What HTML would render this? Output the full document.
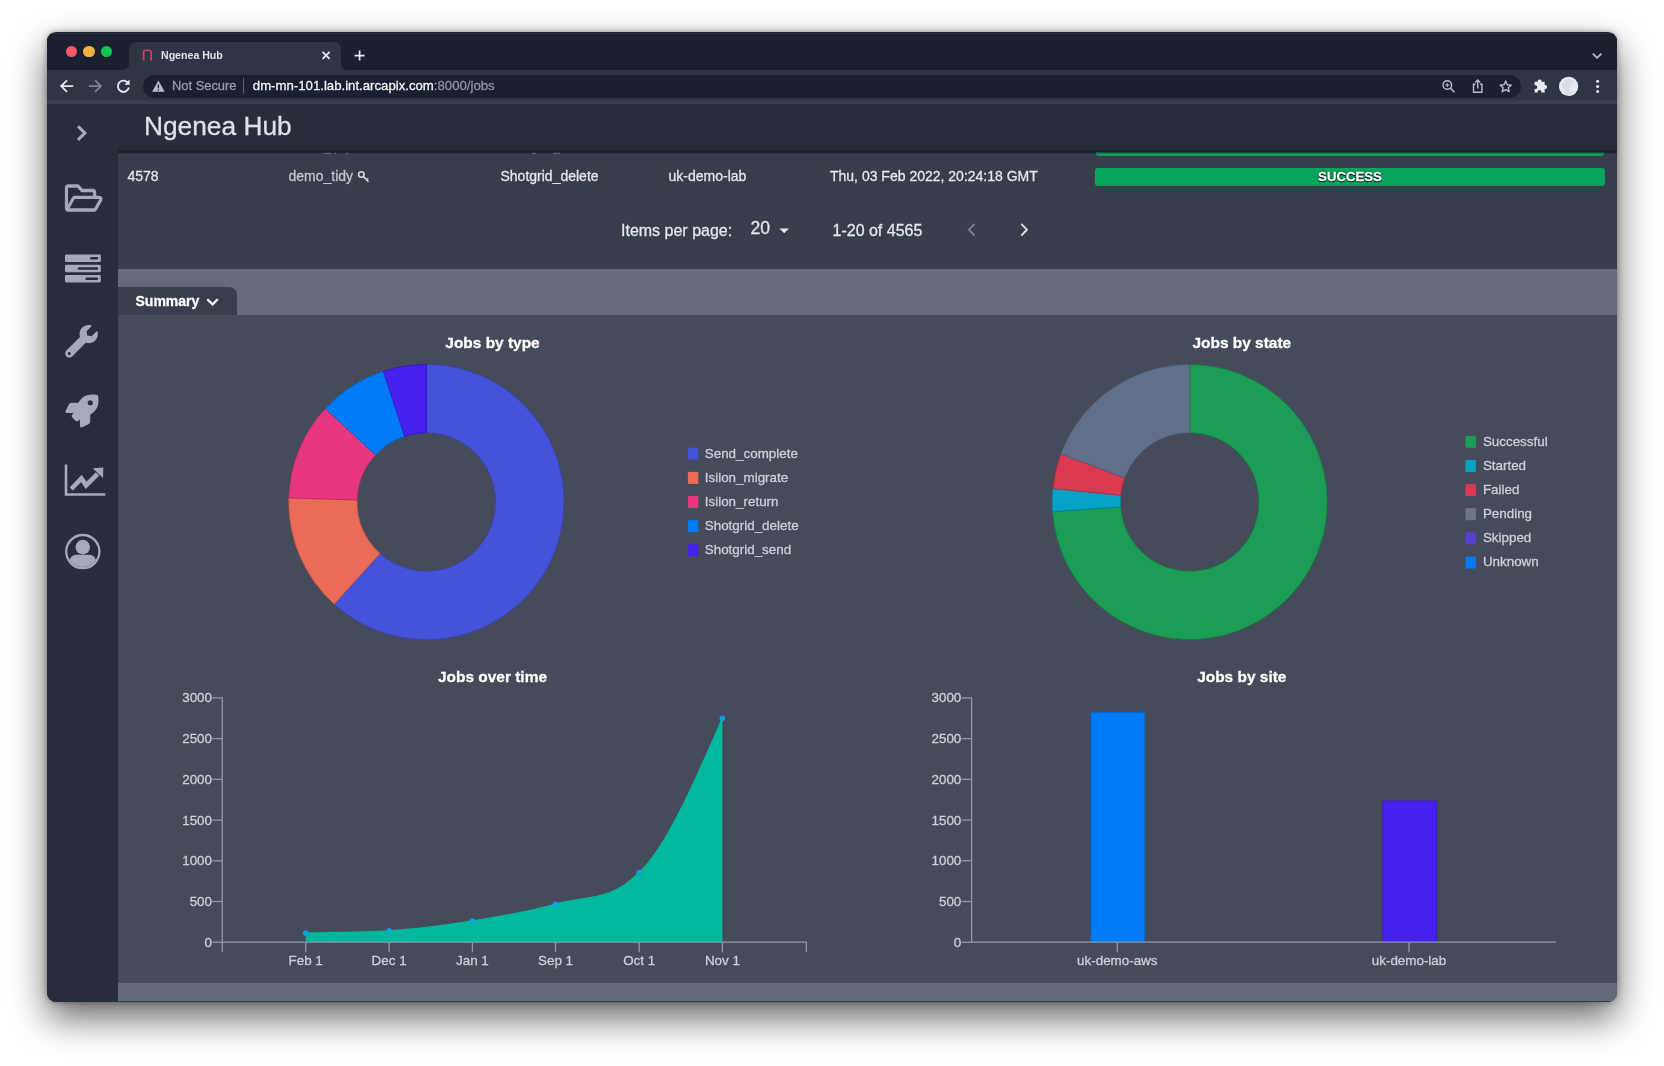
<!DOCTYPE html>
<html lang="en">
<head>
<meta charset="utf-8">
<title>Ngenea Hub</title>
<style>
html,body{margin:0;padding:0;}
body{width:1664px;height:1066px;background:#fff;overflow:hidden;position:relative;font-family:"Liberation Sans",Arial,sans-serif;}
.abs{position:absolute;}
#shadow{left:47px;top:32px;width:1570px;height:970px;border-radius:9px;box-shadow:0 16px 36px rgba(0,0,0,.6),0 0 6px rgba(0,0,0,.35);}
#win{left:47px;top:32px;width:1570px;height:970px;border-radius:9px;overflow:hidden;background:#1a2030;}
#win .abs{white-space:nowrap;}
#tw .abs{-webkit-text-stroke:0.28px currentColor;}
#charts text{stroke-width:0.28px;paint-order:stroke;}
/* chrome */
#tabbar{left:0;top:0;width:1571px;height:37.5px;background:#1a2030;}
#tab{left:82.5px;top:9px;width:211.5px;height:29px;background:#2f3546;border-radius:7px 7px 0 0;}
#toolbar{left:0;top:37.5px;width:1571px;height:34px;background:#2f3546;}
#tbline{left:0;top:67.5px;width:1571px;height:4px;background:linear-gradient(#343a4a,#3a4050 45%);}
#omni{left:96.5px;top:42px;width:1378px;height:23.5px;border-radius:11.75px;background:#1a2030;}
.tl{width:11.4px;height:11.4px;border-radius:50%;top:13.6px;}
/* app */
#sidebar{left:0;top:71.5px;width:71.5px;height:900px;background:#272d3a;}
#header{left:71.5px;top:71.5px;width:1500px;height:49px;background:#272d3a;}
#hshadow{left:71.5px;top:116.6px;width:1500px;height:4.5px;background:linear-gradient(rgba(28,33,44,0),rgba(24,29,41,.98) 55%,rgba(28,33,44,0));}
#tablearea{left:71.5px;top:120.5px;width:1500px;height:116px;background:#373d4b;}
#band{left:71.5px;top:236.5px;width:1500px;height:46px;background:#646b7a;}
#sumtab{left:71.5px;top:254.5px;width:119px;height:28px;background:#383e4c;border-radius:0 8px 0 0;}
#panel{left:71.5px;top:282.5px;width:1500px;height:668px;background:#454b5a;}
#bottomband{left:71.5px;top:950.5px;width:1500px;height:19.5px;background:#626a79;}
.t14{font-size:14px;color:#e4e7ee;line-height:16px;}
.t16{font-size:16px;color:#e4e7ee;line-height:18px;}
svg{position:absolute;left:0;top:0;overflow:visible;}
svg text{font-family:"Liberation Sans",Arial,sans-serif;}
</style>
</head>
<body>
<div id="shadow" class="abs"></div>
<div id="win" class="abs">
  <div id="bgw" class="abs" style="left:-0.5px;top:0.5px;">
  <div id="tabbar" class="abs"></div>
  <div id="tab" class="abs"></div>
  <div class="abs" style="left:76.5px;top:31.5px;width:6px;height:6px;background:radial-gradient(circle at 0 0,rgba(47,53,70,0) 5.6px,#2f3546 6.3px);"></div>
  <div class="abs" style="left:294px;top:31.5px;width:6px;height:6px;background:radial-gradient(circle at 100% 0,rgba(47,53,70,0) 5.6px,#2f3546 6.3px);"></div>
  <div id="toolbar" class="abs"></div>
  <div id="tbline" class="abs"></div>
  <div id="omni" class="abs"></div>
  <div id="sidebar" class="abs"></div>
  <div id="header" class="abs"></div>
  <div id="tablearea" class="abs"></div>
  <div class="abs" style="left:1049.5px;top:119px;width:508px;height:4px;background:#129e59;border-radius:0 0 3px 3px;"></div>
  <div id="hshadow" class="abs"></div>
  <div id="band" class="abs"></div>
  <div id="sumtab" class="abs"></div>
  <div id="panel" class="abs"></div>
  <div id="bottomband" class="abs"></div>
  <div class="abs" style="left:0;top:968.5px;width:1571px;height:1px;background:rgba(40,45,58,.75);"></div>
  <div class="abs" style="left:0;top:0.5px;width:1571px;height:1px;background:rgba(255,255,255,.07);"></div>
  </div>
  <div id="fg" class="abs" style="left:0;top:0;width:1570px;height:970px;will-change:transform;">
  <div id="tw" class="abs" style="left:-0.5px;top:0.5px;">
  <div class="abs tl" style="left:19px;background:#f4596a;"></div>
  <div class="abs tl" style="left:36.7px;background:#f5b03e;"></div>
  <div class="abs tl" style="left:54.4px;background:#10c550;"></div>
  <div class="abs" style="left:114.5px;top:16px;font-size:10.6px;font-weight:700;color:#dfe3ea;line-height:12px;-webkit-text-stroke:0;">Ngenea Hub</div>
  <div class="abs" style="left:125.5px;top:46.5px;font-size:12.9px;color:#979dab;line-height:14px;">Not Secure</div>
  <div class="abs" style="left:196px;top:45px;width:1px;height:16px;background:#5a6170;"></div>
  <div class="abs" style="left:206.3px;top:46.5px;font-size:13.2px;color:#f2f4f8;line-height:14px;">dm-mn-101.lab.int.arcapix.com<span style="color:#8f96a3">:8000/jobs</span></div>


  <div class="abs" style="left:97.5px;top:77px;font-size:26.3px;color:#dde1ea;line-height:32px;">Ngenea Hub</div>

  <!-- table row -->
  <div class="abs t14" style="left:81px;top:135px;">4578</div>
  <div class="abs t14" style="left:242px;top:135px;color:#c0c6d2;">demo_tidy</div>
  <div class="abs t14" style="left:454px;top:135px;">Shotgrid_delete</div>
  <div class="abs t14" style="left:622px;top:135px;">uk-demo-lab</div>
  <div class="abs t14" style="left:783.5px;top:135px;">Thu, 03 Feb 2022, 20:24:18 GMT</div>
  <div class="abs" style="left:1048.5px;top:135.5px;width:510px;height:17.5px;background:#05a65c;border-radius:3px;text-align:center;font-size:13.2px;font-weight:700;color:#fff;line-height:17.5px;text-shadow:0 0 2px #000,0 1px 1px #000;">SUCCESS</div>

  <!-- paginator -->
  <div class="abs t16" style="left:574.5px;top:189.3px;">Items per page:</div>
  <div class="abs" style="left:704px;top:185px;font-size:17.6px;color:#e4e7ee;line-height:20px;">20</div>
  <div class="abs t16" style="left:786px;top:189.3px;">1-20 of 4565</div>

  <div class="abs" style="left:89px;top:260.3px;font-size:14px;font-weight:700;color:#fff;line-height:16px;">Summary</div>

  </div>
  <svg id="charts" width="1570" height="970" viewBox="47 32 1570 970"><!--CS-->
<text x="492.5" y="348.3" text-anchor="middle" font-size="15.45" font-weight="700" fill="#ffffff" stroke="#ffffff">Jobs by type</text>
<text x="1241.8" y="348.3" text-anchor="middle" font-size="15.45" font-weight="700" fill="#ffffff" stroke="#ffffff">Jobs by state</text>
<text x="492.5" y="682.3" text-anchor="middle" font-size="15.45" font-weight="700" fill="#ffffff" stroke="#ffffff">Jobs over time</text>
<text x="1241.8" y="682.3" text-anchor="middle" font-size="15.45" font-weight="700" fill="#ffffff" stroke="#ffffff">Jobs by site</text>
<path d="M426.35 364.40A137.6 137.6 0 1 1 334.28 604.26L379.98 553.50A69.3 69.3 0 1 0 426.35 432.70Z" fill="#4552da" stroke="#3943b8" stroke-width="0.8" stroke-linejoin="round"/>
<path d="M334.28 604.26A137.6 137.6 0 0 1 288.81 497.92L357.08 499.94A69.3 69.3 0 0 0 379.98 553.50Z" fill="#ea6b57" stroke="#c4503f" stroke-width="0.8" stroke-linejoin="round"/>
<path d="M288.81 497.92A137.6 137.6 0 0 1 325.39 408.51L375.50 454.91A69.3 69.3 0 0 0 357.08 499.94Z" fill="#e83781" stroke="#c02766" stroke-width="0.8" stroke-linejoin="round"/>
<path d="M325.39 408.51A137.6 137.6 0 0 1 383.37 371.28L404.71 436.17A69.3 69.3 0 0 0 375.50 454.91Z" fill="#007bf6" stroke="#0464c8" stroke-width="0.8" stroke-linejoin="round"/>
<path d="M383.37 371.28A137.6 137.6 0 0 1 426.35 364.40L426.35 432.70A69.3 69.3 0 0 0 404.71 436.17Z" fill="#4620ed" stroke="#3414c0" stroke-width="0.8" stroke-linejoin="round"/>
<path d="M1189.70 364.50A137.5 137.5 0 1 1 1052.53 511.59L1120.57 506.83A69.3 69.3 0 1 0 1189.70 432.70Z" fill="#1b9d56" stroke="#14803f" stroke-width="0.8" stroke-linejoin="round"/>
<path d="M1052.53 511.59A137.5 137.5 0 0 1 1052.86 488.58L1120.73 495.24A69.3 69.3 0 0 0 1120.57 506.83Z" fill="#07a3c6" stroke="#0584a2" stroke-width="0.8" stroke-linejoin="round"/>
<path d="M1052.86 488.58A137.5 137.5 0 0 1 1060.91 453.85L1124.79 477.73A69.3 69.3 0 0 0 1120.73 495.24Z" fill="#da3a50" stroke="#b02a3e" stroke-width="0.8" stroke-linejoin="round"/>
<path d="M1060.91 453.85A137.5 137.5 0 0 1 1189.70 364.50L1189.70 432.70A69.3 69.3 0 0 0 1124.79 477.73Z" fill="#61708a" stroke="#4e5b72" stroke-width="0.8" stroke-linejoin="round"/>
<rect x="687.9" y="447.7" width="10.4" height="12" fill="#4552da"/>
<text x="704.8" y="457.5" font-size="13.4" fill="#cdd1db" stroke="#cdd1db">Send_complete</text>
<rect x="687.9" y="471.9" width="10.4" height="12" fill="#ea6b57"/>
<text x="704.8" y="481.7" font-size="13.4" fill="#cdd1db" stroke="#cdd1db">Isilon_migrate</text>
<rect x="687.9" y="496.0" width="10.4" height="12" fill="#e83781"/>
<text x="704.8" y="505.8" font-size="13.4" fill="#cdd1db" stroke="#cdd1db">Isilon_return</text>
<rect x="687.9" y="520.1" width="10.4" height="12" fill="#007bf6"/>
<text x="704.8" y="529.9" font-size="13.4" fill="#cdd1db" stroke="#cdd1db">Shotgrid_delete</text>
<rect x="687.9" y="544.3" width="10.4" height="12" fill="#4620ed"/>
<text x="704.8" y="554.1" font-size="13.4" fill="#cdd1db" stroke="#cdd1db">Shotgrid_send</text>
<rect x="1465.5" y="435.8" width="10.4" height="12" fill="#1b9d56"/>
<text x="1482.9" y="445.6" font-size="13.4" fill="#cdd1db" stroke="#cdd1db">Successful</text>
<rect x="1465.5" y="459.9" width="10.4" height="12" fill="#07a3c6"/>
<text x="1482.9" y="469.8" font-size="13.4" fill="#cdd1db" stroke="#cdd1db">Started</text>
<rect x="1465.5" y="484.1" width="10.4" height="12" fill="#da3a50"/>
<text x="1482.9" y="493.9" font-size="13.4" fill="#cdd1db" stroke="#cdd1db">Failed</text>
<rect x="1465.5" y="508.2" width="10.4" height="12" fill="#6c778a"/>
<text x="1482.9" y="518.0" font-size="13.4" fill="#cdd1db" stroke="#cdd1db">Pending</text>
<rect x="1465.5" y="532.4" width="10.4" height="12" fill="#5b40d2"/>
<text x="1482.9" y="542.2" font-size="13.4" fill="#cdd1db" stroke="#cdd1db">Skipped</text>
<rect x="1465.5" y="556.5" width="10.4" height="12" fill="#007bf6"/>
<text x="1482.9" y="566.3" font-size="13.4" fill="#cdd1db" stroke="#cdd1db">Unknown</text>
<path d="M222.3 697.3V952.2" stroke="#9299a8" stroke-width="1.3" fill="none"/>
<path d="M212.3 942.2H222.3" stroke="#9299a8" stroke-width="1.3"/>
<text x="212.0" y="946.7" text-anchor="end" font-size="13.4" fill="#cdd1db" stroke="#cdd1db">0</text>
<path d="M212.3 901.5H222.3" stroke="#9299a8" stroke-width="1.3"/>
<text x="212.0" y="906.0" text-anchor="end" font-size="13.4" fill="#cdd1db" stroke="#cdd1db">500</text>
<path d="M212.3 860.8H222.3" stroke="#9299a8" stroke-width="1.3"/>
<text x="212.0" y="865.3" text-anchor="end" font-size="13.4" fill="#cdd1db" stroke="#cdd1db">1000</text>
<path d="M212.3 820.1H222.3" stroke="#9299a8" stroke-width="1.3"/>
<text x="212.0" y="824.6" text-anchor="end" font-size="13.4" fill="#cdd1db" stroke="#cdd1db">1500</text>
<path d="M212.3 779.3H222.3" stroke="#9299a8" stroke-width="1.3"/>
<text x="212.0" y="783.8" text-anchor="end" font-size="13.4" fill="#cdd1db" stroke="#cdd1db">2000</text>
<path d="M212.3 738.6H222.3" stroke="#9299a8" stroke-width="1.3"/>
<text x="212.0" y="743.1" text-anchor="end" font-size="13.4" fill="#cdd1db" stroke="#cdd1db">2500</text>
<path d="M212.3 697.9H222.3" stroke="#9299a8" stroke-width="1.3"/>
<text x="212.0" y="702.4" text-anchor="end" font-size="13.4" fill="#cdd1db" stroke="#cdd1db">3000</text>
<path d="M305.70 933.08C333.50 932.71 361.30 932.35 389.10 930.88C416.87 929.42 444.63 925.49 472.40 921.03C500.12 916.58 527.75 912.23 555.50 904.17C583.31 896.10 611.37 902.06 639.20 872.58C666.96 848.13 699.52 770.66 722.40 718.35L722.40 942.2L305.70 942.2Z" fill="#00b89d"/>
<path d="M305.70 933.08C333.50 932.71 361.30 932.35 389.10 930.88C416.87 929.42 444.63 925.49 472.40 921.03C500.12 916.58 527.75 912.23 555.50 904.17C583.31 896.10 611.37 902.06 639.20 872.58C666.96 848.13 699.52 770.66 722.40 718.35" fill="none" stroke="#00b89d" stroke-width="1.5"/>
<circle cx="305.7" cy="933.1" r="2.8" fill="#0ea2dc"/>
<circle cx="389.1" cy="930.9" r="2.8" fill="#0ea2dc"/>
<circle cx="472.4" cy="921.0" r="2.8" fill="#0ea2dc"/>
<circle cx="555.5" cy="904.2" r="2.8" fill="#0ea2dc"/>
<circle cx="639.2" cy="872.6" r="2.8" fill="#0ea2dc"/>
<circle cx="722.4" cy="718.3" r="2.8" fill="#0ea2dc"/>
<path d="M222.3 942.2H806.4V952.2" stroke="#9299a8" stroke-width="1.3" fill="none"/>
<path d="M305.7 942.2V952.2" stroke="#9299a8" stroke-width="1.3"/>
<text x="305.7" y="965.3" text-anchor="middle" font-size="13.4" fill="#cdd1db" stroke="#cdd1db">Feb 1</text>
<path d="M389.1 942.2V952.2" stroke="#9299a8" stroke-width="1.3"/>
<text x="389.1" y="965.3" text-anchor="middle" font-size="13.4" fill="#cdd1db" stroke="#cdd1db">Dec 1</text>
<path d="M472.4 942.2V952.2" stroke="#9299a8" stroke-width="1.3"/>
<text x="472.4" y="965.3" text-anchor="middle" font-size="13.4" fill="#cdd1db" stroke="#cdd1db">Jan 1</text>
<path d="M555.5 942.2V952.2" stroke="#9299a8" stroke-width="1.3"/>
<text x="555.5" y="965.3" text-anchor="middle" font-size="13.4" fill="#cdd1db" stroke="#cdd1db">Sep 1</text>
<path d="M639.2 942.2V952.2" stroke="#9299a8" stroke-width="1.3"/>
<text x="639.2" y="965.3" text-anchor="middle" font-size="13.4" fill="#cdd1db" stroke="#cdd1db">Oct 1</text>
<path d="M722.4 942.2V952.2" stroke="#9299a8" stroke-width="1.3"/>
<text x="722.4" y="965.3" text-anchor="middle" font-size="13.4" fill="#cdd1db" stroke="#cdd1db">Nov 1</text>
<path d="M971.6 697.3V942.2" stroke="#9299a8" stroke-width="1.3" fill="none"/>
<path d="M961.6 942.2H971.6" stroke="#9299a8" stroke-width="1.3"/>
<text x="961.3" y="946.7" text-anchor="end" font-size="13.4" fill="#cdd1db" stroke="#cdd1db">0</text>
<path d="M961.6 901.5H971.6" stroke="#9299a8" stroke-width="1.3"/>
<text x="961.3" y="906.0" text-anchor="end" font-size="13.4" fill="#cdd1db" stroke="#cdd1db">500</text>
<path d="M961.6 860.8H971.6" stroke="#9299a8" stroke-width="1.3"/>
<text x="961.3" y="865.3" text-anchor="end" font-size="13.4" fill="#cdd1db" stroke="#cdd1db">1000</text>
<path d="M961.6 820.1H971.6" stroke="#9299a8" stroke-width="1.3"/>
<text x="961.3" y="824.6" text-anchor="end" font-size="13.4" fill="#cdd1db" stroke="#cdd1db">1500</text>
<path d="M961.6 779.3H971.6" stroke="#9299a8" stroke-width="1.3"/>
<text x="961.3" y="783.8" text-anchor="end" font-size="13.4" fill="#cdd1db" stroke="#cdd1db">2000</text>
<path d="M961.6 738.6H971.6" stroke="#9299a8" stroke-width="1.3"/>
<text x="961.3" y="743.1" text-anchor="end" font-size="13.4" fill="#cdd1db" stroke="#cdd1db">2500</text>
<path d="M961.6 697.9H971.6" stroke="#9299a8" stroke-width="1.3"/>
<text x="961.3" y="702.4" text-anchor="end" font-size="13.4" fill="#cdd1db" stroke="#cdd1db">3000</text>
<rect x="1091.0" y="712.6" width="53.8" height="229.6" fill="#007bf6" stroke="#0467d0" stroke-width="0.9"/>
<rect x="1382.7" y="801.0" width="54" height="141.2" fill="#4620ed" stroke="#3a1bc8" stroke-width="0.9"/>
<path d="M971.6 942.2H1556.2" stroke="#9299a8" stroke-width="1.3" fill="none"/>
<path d="M1117.3 942.2V952.2" stroke="#9299a8" stroke-width="1.3"/>
<text x="1117.3" y="965.3" text-anchor="middle" font-size="13.4" fill="#cdd1db" stroke="#cdd1db">uk-demo-aws</text>
<path d="M1409.0 942.2V952.2" stroke="#9299a8" stroke-width="1.3"/>
<text x="1409.0" y="965.3" text-anchor="middle" font-size="13.4" fill="#cdd1db" stroke="#cdd1db">uk-demo-lab</text>
<!--CE-->
<!--IS-->
<path d="M143.6 60.5V52.2Q143.6 50.4 145.4 50.4H149.3Q151.1 50.4 151.1 52.2V60.5" fill="none" stroke="#de3a5b" stroke-width="1.7"/>
<path d="M322.6 51.9l7 7M329.6 51.9l-7 7" stroke="#e6e9ef" stroke-width="1.7" fill="none"/>
<path d="M354.6 55.6h10M359.6 50.6v10" stroke="#e6e9ef" stroke-width="1.7" fill="none"/>
<path d="M1592.8 53.6l4.3 4.3 4.3-4.3" stroke="#b8bdc9" stroke-width="1.7" fill="none"/>
<path d="M73.2 86.1H61.4M67 80.3l-5.8 5.8 5.8 5.8" stroke="#e6e9ef" stroke-width="1.8" fill="none"/>
<path d="M88.9 86.1h11.8M95.1 80.3l5.800 5.800-5.800 5.800" stroke="#7d8493" stroke-width="1.8" fill="none"/>
<path d="M128.2 83.2A5.6 5.6 0 1 0 128.9 87.6" stroke="#e6e9ef" stroke-width="1.9" fill="none"/><path d="M129.6 79.6v5.200h-5.200z" fill="#e6e9ef"/>
<path d="M158.400 80.600l6.300 11.200h-12.600z" fill="#b8bdc9"/><path d="M158.400 84.600v3.600M158.400 89.300v1.300" stroke="#1a2030" stroke-width="1.300"/>
<circle cx="1447.3" cy="85" r="4.3" fill="none" stroke="#b8bdc9" stroke-width="1.4"/><path d="M1450.5 88.300l4 4" stroke="#b8bdc9" stroke-width="1.6"/><path d="M1445.200 85h4.200M1447.300 82.900v4.200" stroke="#b8bdc9" stroke-width="1.100"/>
<path d="M1475.400 84.200h-1.900v8h8.400v-8h-1.900" fill="none" stroke="#b8bdc9" stroke-width="1.400"/><path d="M1477.700 88.500v-8.200M1475.200 82.400l2.500-2.500 2.500 2.500" fill="none" stroke="#b8bdc9" stroke-width="1.400"/>
<path d="M1505.70 81.00L1507.29 84.72L1511.31 85.08L1508.27 87.73L1509.17 91.67L1505.70 89.60L1502.23 91.67L1503.13 87.73L1500.09 85.08L1504.11 84.72Z" fill="none" stroke="#b8bdc9" stroke-width="1.400" stroke-linejoin="round"/>
<path d="M1534.600 81.800h3.200a1.900 1.900 0 1 1 3.700 0h3.200v3.300a1.900 1.900 0 1 1 0 3.700v3.600h-3.500a1.800 1.800 0 1 0-3.400 0h-3.200v-3.500a1.900 1.900 0 1 0 0-3.500z" fill="#e6e9ef"/>
<circle cx="1568.600" cy="86.400" r="9.600" fill="#e9ebf2"/><path d="M1563 83a6 6 0 0 1 9-3.500c2 2 1 5-1 6.500s-1 5 2 7a9.600 9.600 0 0 1-9 1.500c2-3 1-5-1-6.500s-1.500-3.500 0-5z" fill="#c6cadb" opacity=".4"/>
<circle cx="1597.600" cy="81.200" r="1.500" fill="#e6e9ef"/><circle cx="1597.600" cy="86.400" r="1.500" fill="#e6e9ef"/><circle cx="1597.600" cy="91.600" r="1.500" fill="#e6e9ef"/>
<path d="M78.000 126.300l6.900 6.800-6.900 6.800" stroke="#a4aab9" stroke-width="3" fill="none"/>
<g transform="translate(64.900 179.75) scale(0.06528 0.07115)"><path d="M527.9 224H480v-48c0-26.500-21.500-48-48-48H272l-64-64H48C21.500 64 0 85.500 0 112v288c0 26.500 21.500 48 48 48h400c16.500 0 31.900-8.500 40.700-22.600l79.900-128c20-31.900-3-73.400-40.700-73.400zM48 118c0-3.300 2.700-6 6-6h134.100l64 64H426c3.300 0 6 2.700 6 6v42H152c-16.800 0-32.400 8.800-41.100 23.200L48 351.400zm400 282H72l77.200-128H528z" fill="#a4aab9"/></g>
<rect x="65" y="254.6" width="35.800" height="7.500" rx="1.300" fill="#a4aab9"/><rect x="90.1" y="257.1" width="8.0" height="2.500" rx="1.250" fill="#272d3a"/>
<rect x="65" y="264.8" width="35.800" height="7.500" rx="1.300" fill="#a4aab9"/><rect x="77.8" y="267.3" width="20.3" height="2.500" rx="1.250" fill="#272d3a"/>
<rect x="65" y="274.9" width="35.800" height="7.500" rx="1.300" fill="#a4aab9"/><rect x="85.3" y="277.4" width="12.8" height="2.500" rx="1.250" fill="#272d3a"/>
<g transform="translate(65.200 324.900) scale(0.06387)"><path d="M507.730 109.100c-2.240-9.030-13.540-12.090-20.120-5.510l-74.360 74.360-67.880-11.310-11.310-67.880 74.360-74.360c6.620-6.620 3.430-17.900-5.660-20.160-47.380-11.740-99.550.910-136.580 37.930-39.640 39.640-50.550 97.100-34.050 147.200L18.740 402.760c-24.990 24.990-24.990 65.510 0 90.500 24.990 24.990 65.510 24.990 90.500 0l213.210-213.210c50.120 16.710 107.470 5.680 147.370-34.220 37.070-37.070 49.700-89.320 37.910-136.730zM64 472c-13.250 0-24-10.750-24-24 0-13.260 10.750-24 24-24s24 10.740 24 24c0 13.250-10.750 24-24 24z" fill="#a4aab9"/></g>
<g transform="translate(65.500 394.500) scale(0.06445)"><path d="M505.120,19.094c-1.189-5.531-6.658-11-12.207-12.188C460.716,0,435.507,0,410.407,0,307.175,0,245.269,55.203,199.052,128H94.838c-16.348.016-35.557,11.875-42.887,26.484L2.516,253.297A28.400,28.400,0,0,0,0,264a24.009,24.009,0,0,0,24.006,24H127.816l-22.475,22.469c-11.365,11.361-12.996,32.258,0,45.250L156.246,406.625c11.156,11.188,32.156,13.156,45.277,0l22.475-22.469V488a24.009,24.009,0,0,0,24.006,24,28.559,28.559,0,0,0,10.707-2.516l98.728-49.391c14.629-7.297,26.508-26.500,26.508-42.859V312.797c72.598-46.313,128.035-108.406,128.035-211.094C512.075,76.500,512.075,51.297,505.120,19.094ZM384.040,168A40,40,0,1,1,424.050,128,40.023,40.023,0,0,1,384.040,168Z" fill="#a4aab9"/></g>
<path d="M66.000 464.600v29.900h39.300" stroke="#a4aab9" stroke-width="2.600" fill="none"/><path d="M71.300 489.000l10.100-10.600 4.700 7.000 11.400-11.400" stroke="#a4aab9" stroke-width="4.600" fill="none" stroke-linejoin="miter"/><path d="M92.700 468.200l10.600-.6-.3 10.400z" fill="#a4aab9"/>
<defs><clipPath id="uc"><circle cx="82.800" cy="551.600" r="15.500"/></clipPath></defs><circle cx="82.800" cy="551.600" r="16.600" fill="none" stroke="#a4aab9" stroke-width="2.300"/><circle cx="82.800" cy="547.100" r="7.300" fill="#a4aab9"/><path d="M69.500 570v-8.500a6.800 6.800 0 0 1 6.800-6.800h13a6.800 6.800 0 0 1 6.800 6.800V570z" fill="#a4aab9" clip-path="url(#uc)"/>
<circle cx="361.300" cy="174.500" r="2.700" fill="none" stroke="#d6dae3" stroke-width="1.600"/><path d="M363.300 176.500l5.200 5.200M366.600 179.800l1.600-1.600" stroke="#d6dae3" stroke-width="1.600" fill="none"/>
<path d="M779.400 228.400h9.600l-4.800 4.800z" fill="#e4e7ee"/>
<path d="M974.600 223.800l-5.600 5.900 5.600 5.900" stroke="#7b8291" stroke-width="1.900" fill="none"/>
<path d="M1021.300 223.800l5.600 5.900-5.600 5.900" stroke="#dfe3ea" stroke-width="1.900" fill="none"/>
<path d="M207.300 299.200l5.200 5.200 5.200-5.200" stroke="#ffffff" stroke-width="2.300" fill="none"/>
<path d="M323.500 153.300h8M334 153.300h2M346 153.300h2.500M532 153.300h4M553 153.300h7" stroke="#7f8695" stroke-width="0.9" opacity=".8"/>
<!--IE--></svg>
  </div>
</div>
</body>
</html>
